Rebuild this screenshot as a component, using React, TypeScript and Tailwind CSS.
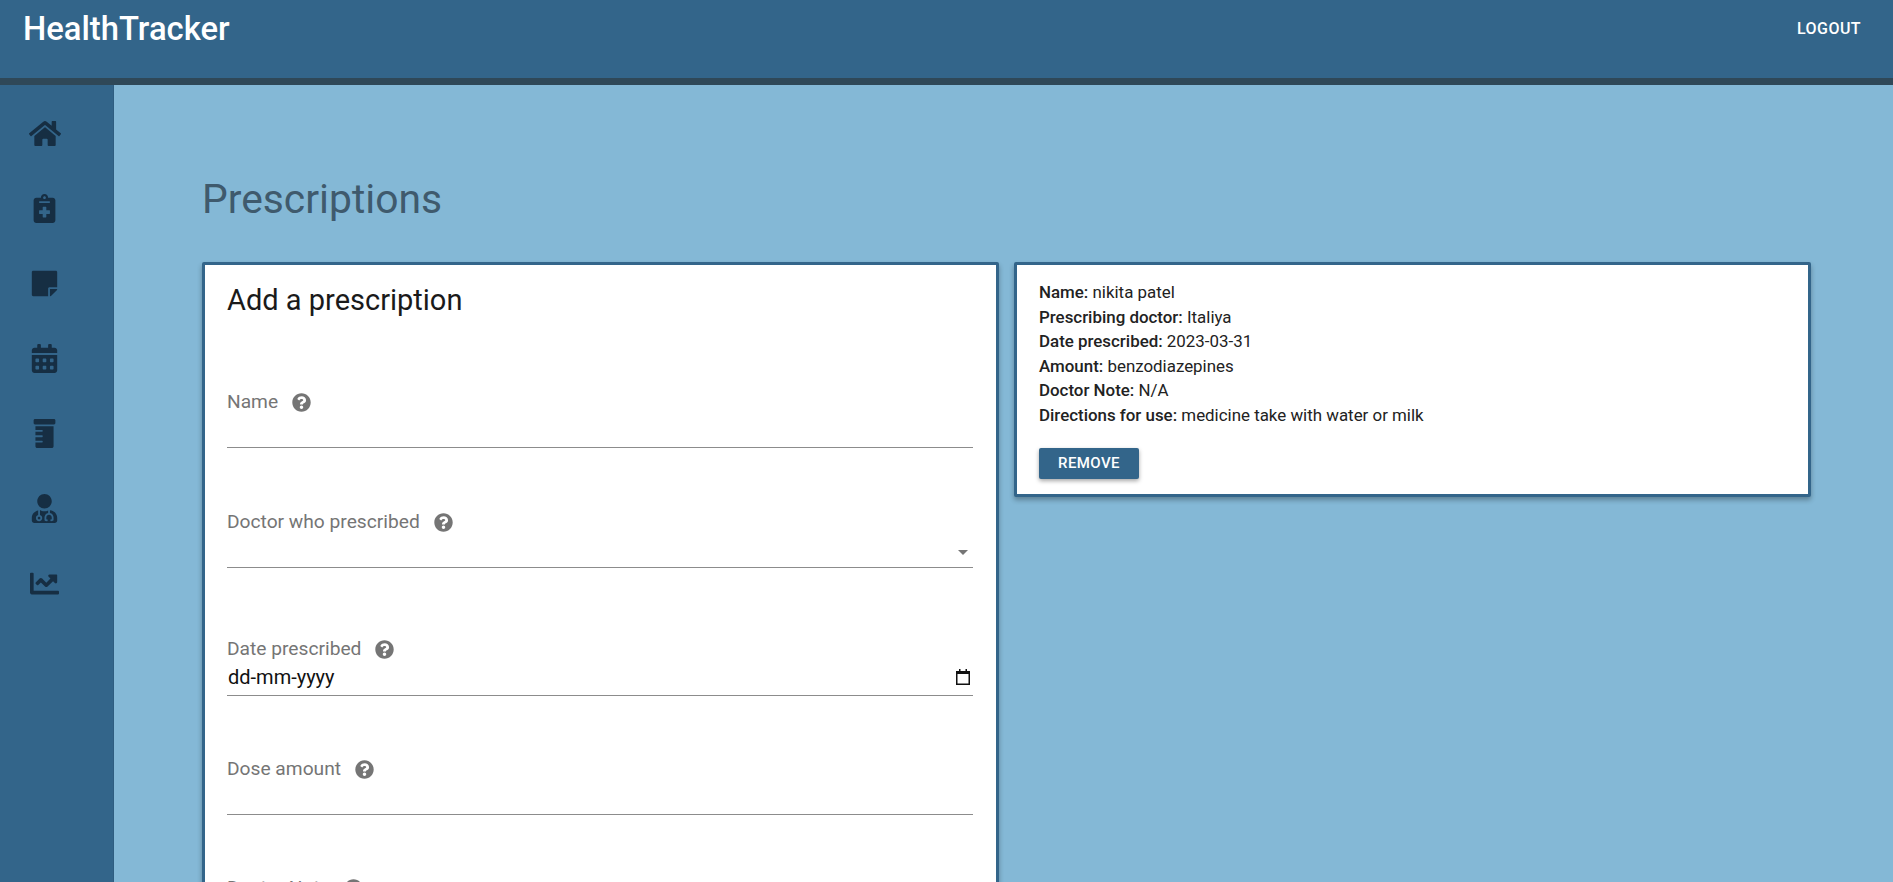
import { FaHome, FaNotesMedical, FaStickyNote, FaCalendarAlt, FaPrescriptionBottle, FaUserMd, FaChartLine, FaQuestionCircle } from "react-icons/fa";

const navIcons = [FaNotesMedical, FaStickyNote, FaCalendarAlt, FaPrescriptionBottle, FaUserMd, FaChartLine];

const details = [
    ["Name:", "nikita patel"],
    ["Prescribing doctor:", "Italiya"],
    ["Date prescribed:", "2023-03-31"],
    ["Amount:", "benzodiazepines"],
    ["Doctor Note:", "N/A"],
    ["Directions for use:", "medicine take with water or milk"],
];

const FieldLabel = ({ text }: { text: string }) => (
    <div className="flex h-[24px] items-center text-[19.2px] leading-[24px] text-[#757575]">
        <span>{text}</span>
        <FaQuestionCircle className="ml-[14px] h-[19px] w-[19px] text-[#757575]" />
    </div>
);

const App = () => {
    return (
        <div className="flex h-screen flex-col overflow-hidden bg-[#84b8d6] font-['Roboto',sans-serif]">
            <header className="flex h-[85px] shrink-0 items-start justify-between border-b-[7px] border-[#2f4858] bg-[#33658a] pl-[23px] pr-[32px]">
                <h1 className="mt-[9px] text-[32.8px] font-medium leading-[40px] text-white">HealthTracker</h1>
                <button className="mt-[19px] text-[16px] font-medium uppercase leading-[20px] tracking-[0.45px] text-white">Logout</button>
            </header>
            <div className="flex min-h-0 flex-1">
                <nav className="flex w-[114px] shrink-0 flex-col items-center gap-[46px] border-r border-[#2f5d80] bg-[#33658a] pt-[34px] pr-[24px]">
                    <FaHome className="h-[29px] w-[32px] text-[#162e43]" />
                    {navIcons.map((Icon, i) => (
                        <Icon key={i} className="h-[29px] w-[29px] text-[#162e43]" />
                    ))}
                </nav>
                <main className="min-w-0 flex-1 pl-[88px]">
                    <h2 className="mt-[89px] text-[40.8px] font-normal leading-[50px] text-[#3f5a6d]">Prescriptions</h2>
                    <div className="mt-[38px] flex items-start gap-[15px]">
                        <section className="w-[797px] shrink-0 rounded-[2px] border-[3px] border-[#33658a] bg-white pl-[22px] pr-[23px] shadow-[0_3px_5px_rgba(0,0,0,0.3)]">
                            <h3 className="mt-[19px] text-[29px] leading-[32px] text-[#1a1a1a]">Add a prescription</h3>
                            <div className="mt-[74px]">
                                <FieldLabel text="Name" />
                                <div className="mt-[33px] border-b border-[#8c8c8c]" />
                            </div>
                            <div className="mt-[62px]">
                                <FieldLabel text="Doctor who prescribed" />
                                <div className="relative mt-[33px] border-b border-[#8c8c8c]">
                                    <span className="absolute right-[5px] top-[-17px] h-0 w-0 border-x-[5px] border-t-[5px] border-x-transparent border-t-[#757575]" />
                                </div>
                            </div>
                            <div className="mt-[69px]">
                                <FieldLabel text="Date prescribed" />
                                <div className="flex h-[35px] items-center justify-between border-b border-[#8c8c8c] pb-[2px] pl-[1px] pr-[2px] text-[20px] leading-[24px] text-[#111]">
                                    <span>dd-mm-yyyy</span>
                                    <svg viewBox="0 0 16 16" className="h-[16px] w-[16px]">
                                        <path d="M1 2h3V0h1.5v2h5V0H12v2h3v14H1zM2.5 5v9.500h11V5z" fill="#111" />
                                    </svg>
                                </div>
                            </div>
                            <div className="mt-[61px]">
                                <FieldLabel text="Dose amount" />
                                <div className="mt-[33px] border-b border-[#8c8c8c]" />
                            </div>
                            <div className="mt-[61px]">
                                <FieldLabel text="Doctor Note" />
                                <div className="mt-[33px] border-b border-[#8c8c8c]" />
                            </div>
                        </section>
                        <section className="w-[797px] shrink-0 rounded-[2px] border-[3px] border-[#33658a] bg-white pb-[15px] pl-[22px] pt-[15px] shadow-[0_3px_5px_rgba(0,0,0,0.3)]">
                            {details.map(([label, value]) => (
                                <p key={label} className="text-[16.9px] leading-[24.5px] text-[#222]">
                                    <b className="font-medium">{label}</b> {value}
                                </p>
                            ))}
                            <button className="mt-[21px] h-[31px] w-[100px] rounded-[2px] bg-[#33658a] text-[15px] font-medium uppercase tracking-[0.43px] text-white shadow-[0_2px_4px_rgba(0,0,0,0.35)]">Remove</button>
                        </section>
                    </div>
                </main>
            </div>
        </div>
    );
};

export default App;
